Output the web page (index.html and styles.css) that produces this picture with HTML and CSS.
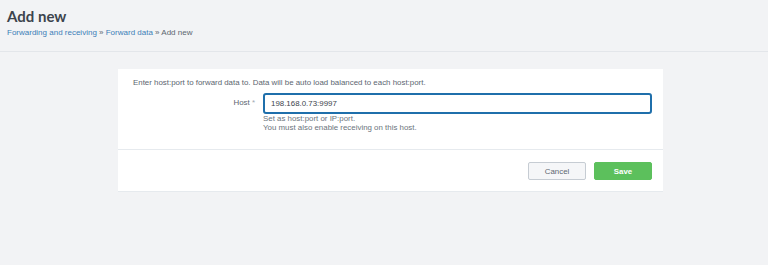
FILE: index.html
```html
<!DOCTYPE html>
<html lang="en">
<head>
    <meta charset="UTF-8">
    <title>Add new</title>
    <link rel="stylesheet" href="styles.css">
</head>
<body>
    <header class="page-header">
        <h1>Add new</h1>
        <div class="breadcrumb">
            <a href="#">Forwarding and receiving</a> &raquo; <a href="#">Forward data</a> &raquo; Add new
        </div>
    </header>

    <main class="content">
        <form class="card">
            <div class="card-body">
                <p class="intro">Enter host:port to forward data to. Data will be auto load balanced to each host:port.</p>
                <div class="field">
                    <label for="host">Host <span class="req">*</span></label>
                    <div class="control">
                        <input type="text" id="host" value="198.168.0.73:9997">
                        <div class="help">Set as host:port or IP:port.<br>You must also enable receiving on this host.</div>
                    </div>
                </div>
            </div>
            <div class="card-footer">
                <button type="button" class="btn btn-cancel">Cancel</button>
                <button type="button" class="btn btn-save">Save</button>
            </div>
        </form>
    </main>
</body>
</html>
```

FILE: styles.css
```css
/* General */
body {
    margin: 0;
    background: #f2f3f5;
    font-family: 'Liberation Sans', Arial, sans-serif;
    color: #3c444d;
}

.page-header {
    padding: 6px 7px 12px;
    border-bottom: 1px solid #e3e6ea;
}

.page-header h1 {
    margin: 0;
    font-family: Lato, 'Liberation Sans', sans-serif;
    font-size: 15px;
    font-weight: bold;
    color: #3c444d;
    line-height: 20px;
}

.breadcrumb {
    margin-top: 1px;
    font-size: 8px;
    line-height: 12px;
    color: #5c6670;
}

.breadcrumb a {
    color: #3d80b8;
    text-decoration: none;
}

/* Card */
.content {
    padding-top: 17px;
}

.card {
    width: 545px;
    margin-left: 118px;
    background: #fff;
    border-bottom: 1px solid #e6eaee;
}

.card-body {
    padding: 9px 11px 17px 15px;
    border-bottom: 1px solid #e6eaee;
}

.intro {
    margin: 0 0 4px;
    font-size: 7.9px;
    line-height: 10px;
    color: #5c6670;
}

.field {
    display: flex;
    align-items: flex-start;
}

.field label {
    width: 122px;
    text-align: right;
    padding-right: 8px;
    font-size: 7.9px;
    line-height: 21px;
    color: #5c6670;
}

.req {
    color: #a0a8b0;
}

.control {
    flex: 1;
}

.control input {
    box-sizing: border-box;
    width: 100%;
    height: 21px;
    margin: 0;
    padding: 0 6px;
    border: 2px solid #1f6fab;
    border-radius: 3px;
    font-family: inherit;
    font-size: 7.9px;
    color: #3c444d;
    outline: none;
}

.help {
    margin-top: 0;
    font-size: 7.9px;
    line-height: 9px;
    color: #6b747c;
}

.card-footer {
    display: flex;
    justify-content: flex-end;
    gap: 8px;
    padding: 12px 11px 11px;
}

.btn {
    width: 58px;
    height: 18px;
    border-radius: 2px;
    font-family: inherit;
    font-size: 7.9px;
    cursor: pointer;
}

.btn-cancel {
    background: #f5f6f8;
    border: 1px solid #c6ccd3;
    color: #5c6670;
}

.btn-save {
    background: #5cc05c;
    border: 1px solid #5cc05c;
    color: #fff;
    font-weight: bold;
}
```
